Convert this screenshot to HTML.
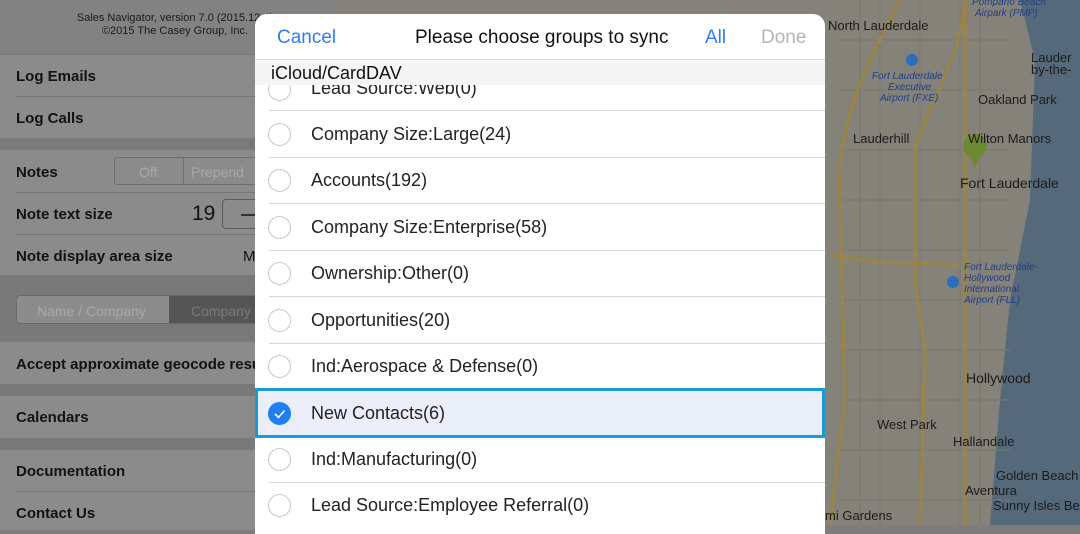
<!DOCTYPE html>
<html><head><meta charset="utf-8"><style>
*{margin:0;padding:0;box-sizing:border-box}
body{width:1080px;height:525px;overflow:hidden;position:relative;background:#7d7d7d;font-family:"Liberation Sans",sans-serif}
.left{position:absolute;left:0;top:0;width:340px;height:525px;background:#797979}
.row{position:absolute;left:0;width:340px;background:#8b8b8b;color:#121212;font-weight:bold;font-size:15px}
.row span{position:absolute;left:16px}
.line{position:absolute;left:16px;width:324px;height:1px;background:#767676}
.map{position:absolute;left:338px;top:0;width:742px;height:525px;background:#85827a;overflow:hidden}
.pop{position:absolute;left:255px;top:14px;width:570px;height:520px;background:#fff;border-radius:12px 12px 0 0;overflow:hidden}
.hdr{position:absolute;top:0;left:0;width:570px;height:46px;border-bottom:1px solid #d8d8d8;font-size:19px}
.sec{position:absolute;top:47px;left:0;width:570px;height:24px;background:#f4f4f4;font-size:18px;color:#111;padding-left:16px;line-height:24px}
.it{position:absolute;left:0;width:570px;height:46.5px;font-size:18px;color:#222}
.it .c{position:absolute;left:13px;top:12px;width:23px;height:23px;border:1.3px solid #c8c8c8;border-radius:50%}
.it .t{position:absolute;left:56px;top:13px}
.it .s{position:absolute;left:14px;right:0;bottom:0;height:1px;background:#d6d6d6}
</style></head><body>
<div class="left">
<div style="position:absolute;top:0;left:0;width:340px;height:54px;background:#828282;font-size:11px;color:#1a1a1a;text-align:center;line-height:13px;padding-top:12px;padding-left:10px">Sales Navigator, version 7.0 (2015.12.4)<br>©2015 The Casey Group, Inc.</div>
<div class="row" style="top:55px;height:83px"><span style="top:13px">Log Emails</span><span style="top:55px">Log Calls</span></div>
<div class="line" style="top:96px"></div>
<div class="row" style="top:150px;height:125px"><span style="top:14px">Notes</span><span style="top:56px">Note text size</span><span style="top:98px">Note display area size</span>
<div style="position:absolute;left:114px;top:7px;width:150px;height:28px;border:1px solid #6e6e6e;border-radius:3px;font-weight:normal;font-size:14px;color:#a8a8a8"><i style="position:absolute;left:24px;top:6px;font-style:normal">Off</i><b style="position:absolute;left:68px;top:0;width:1px;height:26px;background:#6e6e6e"></b><i style="position:absolute;left:76px;top:6px;font-style:normal">Prepend</i></div>
<div style="position:absolute;left:192px;top:52px;font-weight:normal;font-size:21px">19</div>
<div style="position:absolute;left:222px;top:49px;width:60px;height:30px;border:1px solid #5a5a5a;border-radius:4px"><i style="position:absolute;left:18px;top:14px;width:20px;height:1.5px;background:#333"></i></div>
<div style="position:absolute;left:243px;top:98px;font-weight:normal">M</div></div>
<div class="line" style="top:192px"></div><div class="line" style="top:234px"></div>
<div style="position:absolute;left:16px;top:295px;width:300px;height:29px;border:1px solid #6a6a6a;border-radius:4px;font-size:14px;color:#a9a9a9;overflow:hidden;background:#8c8c8c"><span style="position:absolute;left:20px;top:7px">Name / Company</span><div style="position:absolute;left:152px;top:0;width:160px;height:29px;background:#555"><span style="position:absolute;left:22px;top:7px;color:#7a7a7a">Company</span></div></div>
<div class="row" style="top:342px;height:42px"><span style="top:14px">Accept approximate geocode results</span></div>
<div class="row" style="top:396px;height:42px"><span style="top:13px">Calendars</span></div>
<div class="row" style="top:450px;height:80px"><span style="top:13px">Documentation</span><span style="top:55px">Contact Us</span></div>
<div class="line" style="top:491px"></div>
</div>
<div class="map">
<svg width="742" height="525" viewBox="338 0 742 525">
<rect x="338" y="0" width="742" height="525" fill="#85827a"/>
<path d="M1020 0 L1035 60 L1030 200 L1010 300 L1000 400 L990 525 L1080 525 L1080 0Z" fill="#56697a"/>
<g stroke="#7a776f" stroke-width="1" fill="none">
<path d="M840 40H1010M840 90H1010M840 150H1010M840 200H1010M840 250H1010M840 300H1010M840 350H1010M840 400H1010M840 450H1010M840 500H1010"/>
<path d="M860 0V525M880 0V525M920 0V525M960 0V525M980 0V525"/>
</g>
<g stroke="#9a8544" stroke-width="3" fill="none">
<path d="M900 0 C870 60 835 120 840 200 L845 400 L830 525"/>
<path d="M965 0 C960 60 930 100 915 150 L915 280 L925 350 L920 525"/>
<path d="M830 255 L880 262 L960 265"/>
<path d="M965 0 V525"/>
</g>
<circle cx="975" cy="146" r="12" fill="#6c8a30"/><path d="M968 152 L975 167 L982 152Z" fill="#6c8a30"/>
<g font-family="Liberation Sans" font-size="13" fill="#1b1b1b">
<text x="828" y="30">North Lauderdale</text><text x="978" y="104">Oakland Park</text>
<text x="853" y="143">Lauderhill</text><text x="968" y="143">Wilton Manors</text>
<text x="960" y="188" font-size="14">Fort Lauderdale</text><text x="966" y="383" font-size="14">Hollywood</text>
<text x="877" y="429">West Park</text><text x="953" y="446">Hallandale</text>
<text x="996" y="480">Golden Beach</text><text x="965" y="495">Aventura</text><text x="993" y="510">Sunny Isles Beach</text>
<text x="825" y="520">mi Gardens</text><text x="1031" y="62">Lauder</text><text x="1031" y="74">by-the-</text>
</g>
<g font-family="Liberation Sans" font-size="10" font-style="italic" fill="#1f3f8a">
<text x="872" y="79">Fort Lauderdale</text><text x="888" y="90">Executive</text><text x="880" y="101">Airport (FXE)</text>
<text x="964" y="270">Fort Lauderdale-</text><text x="964" y="281">Hollywood</text><text x="964" y="292">International</text><text x="964" y="303">Airport (FLL)</text>
<text x="972" y="5">Pompano Beach</text><text x="975" y="16">Airpark (PMP)</text>
</g>
<circle cx="912" cy="60" r="6" fill="#2a6fbf"/><circle cx="953" cy="282" r="6" fill="#2a6fbf"/>
</svg>
</div>
<div class="pop">
<div class="hdr"><span style="position:absolute;left:22px;top:13px;color:#2a7ef0">Cancel</span><span style="position:absolute;left:160px;top:13px;color:#111">Please choose groups to sync</span><span style="position:absolute;left:450px;top:13px;color:#2a7ef0">All</span><span style="position:absolute;left:506px;top:13px;color:#b5b5b5">Done</span></div>
<div class="it" style="top:50px"><div class="c" style="top:14px"></div><div class="t" style="top:14px">Lead Source:Web(0)</div><div class="s"></div></div>
<div class="sec">iCloud/CardDAV</div>
<div class="it" style="top:97px"><div class="c"></div><div class="t">Company Size:Large(24)</div><div class="s"></div></div>
<div class="it" style="top:143px"><div class="c"></div><div class="t">Accounts(192)</div><div class="s"></div></div>
<div class="it" style="top:190px"><div class="c"></div><div class="t">Company Size:Enterprise(58)</div><div class="s"></div></div>
<div class="it" style="top:236px"><div class="c"></div><div class="t">Ownership:Other(0)</div><div class="s"></div></div>
<div class="it" style="top:283px"><div class="c"></div><div class="t">Opportunities(20)</div><div class="s"></div></div>
<div class="it" style="top:329px"><div class="c"></div><div class="t">Ind:Aerospace &amp; Defense(0)</div><div class="s"></div></div>
<div style="position:absolute;top:374px;left:0;width:570px;height:50px;background:#e9eef8;border:3px solid #1b9bd6"></div>
<div class="it" style="top:376px"><div class="c" style="background:#1f7ef2;border-color:#1f7ef2"><svg width="21" height="21" style="position:absolute;left:0;top:0"><path d="M6 11 L9.5 14.5 L15.5 7.5" stroke="#fff" stroke-width="1.6" fill="none"/></svg></div><div class="t">New Contacts(6)</div></div>
<div class="it" style="top:422px"><div class="c"></div><div class="t">Ind:Manufacturing(0)</div><div class="s"></div></div>
<div class="it" style="top:468px"><div class="c"></div><div class="t">Lead Source:Employee Referral(0)</div></div>
</div>
</body></html>
